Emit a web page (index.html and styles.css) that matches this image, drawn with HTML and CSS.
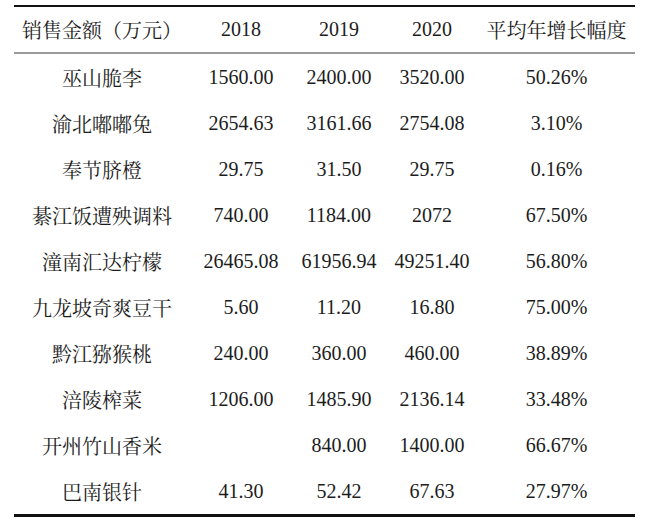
FILE: index.html
```html
<!DOCTYPE html>
<html lang="zh">
<head>
<meta charset="utf-8">
<link rel="stylesheet" href="styles.css">
</head>
<body>
<table class="sales">
  <colgroup>
    <col class="c1"><col class="c2"><col class="c3"><col class="c4"><col class="c5">
  </colgroup>
  <thead>
    <tr><th>销售金额（万元）</th><th>2018</th><th>2019</th><th>2020</th><th>平均年增长幅度</th></tr>
  </thead>
  <tbody>
    <tr><td>巫山脆李</td><td>1560.00</td><td>2400.00</td><td>3520.00</td><td>50.26%</td></tr>
    <tr><td>渝北嘟嘟兔</td><td>2654.63</td><td>3161.66</td><td>2754.08</td><td>3.10%</td></tr>
    <tr><td>奉节脐橙</td><td>29.75</td><td>31.50</td><td>29.75</td><td>0.16%</td></tr>
    <tr><td>綦江饭遭殃调料</td><td>740.00</td><td>1184.00</td><td>2072</td><td>67.50%</td></tr>
    <tr><td>潼南汇达柠檬</td><td>26465.08</td><td>61956.94</td><td>49251.40</td><td>56.80%</td></tr>
    <tr><td>九龙坡奇爽豆干</td><td>5.60</td><td>11.20</td><td>16.80</td><td>75.00%</td></tr>
    <tr><td>黔江猕猴桃</td><td>240.00</td><td>360.00</td><td>460.00</td><td>38.89%</td></tr>
    <tr><td>涪陵榨菜</td><td>1206.00</td><td>1485.90</td><td>2136.14</td><td>33.48%</td></tr>
    <tr><td>开州竹山香米</td><td></td><td>840.00</td><td>1400.00</td><td>66.67%</td></tr>
    <tr><td>巴南银针</td><td>41.30</td><td>52.42</td><td>67.63</td><td>27.97%</td></tr>
  </tbody>
</table>
</body>
</html>
```
FILE: styles.css
```css
html, body {
  margin: 0;
  padding: 0;
  background: #ffffff;
}

body {
  padding: 5px 0 0 14px;
}

.sales {
  width: 621px;
  border-collapse: collapse;
  table-layout: fixed;
  font-family: "Liberation Serif", "Noto Serif CJK SC", "Noto Sans CJK SC", serif;
  font-size: 20px;
  color: #1c1c1c;
  border-top: 2px solid #111111;
  border-bottom: 3px solid #111111;
}

.c1 { width: 176px; }
.c2 { width: 102px; }
.c3 { width: 94px; }
.c4 { width: 92px; }
.c5 { width: 157px; }

.sales th,
.sales td {
  padding: 0;
  text-align: center;
  white-space: nowrap;
  font-weight: normal;
}

.sales thead th {
  height: 45px;
  border-bottom: 2px solid #9a9a9a;
}

.sales thead th:first-child {
  text-align: left;
  padding-left: 8px;
}

.sales tbody td {
  height: 46px;
}
```
